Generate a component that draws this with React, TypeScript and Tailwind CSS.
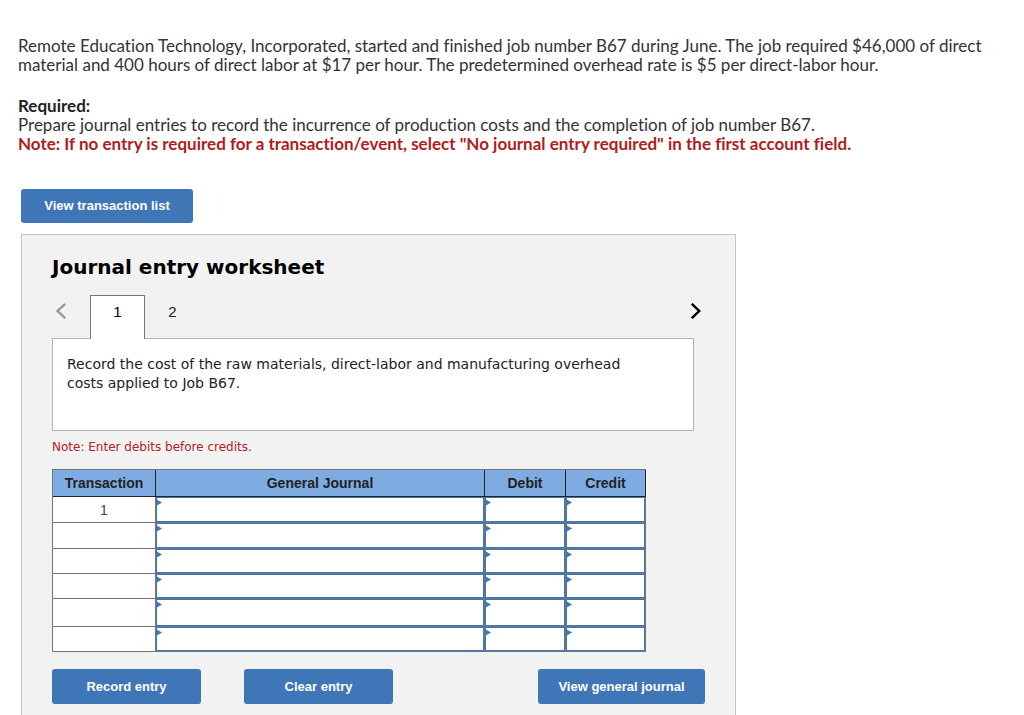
import { useState } from "react";
import clsx from "clsx";

const ENTRIES = [
  {
    id: 1,
    text: "Record the cost of the raw materials, direct-labor and manufacturing overhead costs applied to Job B67.",
  },
  { id: 2, text: "Record the completion of Job B67." },
];

const ROWS = [
  { label: "1", height: "h-[25px]" },
  { label: "", height: "h-[25px]" },
  { label: "", height: "h-[24px]" },
  { label: "", height: "h-[24px]" },
  { label: "", height: "h-[27px]" },
  { label: "", height: "h-[24px]" },
];

const FIELDS = ["General Journal", "Debit", "Credit"];

function Button({ className, children }: { className: string; children: React.ReactNode }) {
  return (
    <button
      type="button"
      className={clsx(
        "rounded-[3px] bg-[#3f76b7] text-[13px] leading-4 font-bold text-white hover:bg-[#35669f]",
        className,
      )}
    >
      {children}
    </button>
  );
}

function Chevron({ flip }: { flip?: boolean }) {
  return (
    <svg width="10" height="16" viewBox="0 0 10 16" fill="none" stroke="currentColor" strokeWidth="2.4">
      <path d={flip ? "M9.2 0.8 L1.6 8 L9.2 15.2" : "M0.8 0.8 L8.2 8 L0.8 15.2"} />
    </svg>
  );
}

function Field({ label, height }: { label: string; height: string }) {
  return (
    <td className="relative border-r border-b border-[#757575] p-0">
      <input
        type="text"
        aria-label={label}
        className={clsx("block w-full border border-[#3f76b7] bg-white px-2 text-sm outline-none", height)}
      />
      <svg className="absolute top-0.5 left-0" width="6" height="7" viewBox="0 0 6 7">
        <path d="M0 0 L6 3.5 L0 7 Z" fill="#3f76b7" />
      </svg>
    </td>
  );
}

function JournalTable() {
  return (
    <table className="mt-3.5 w-[594px] table-fixed border-separate border-spacing-0 border-t border-l border-[#757575] bg-white">
      <colgroup>
        <col className="w-[103px]" />
        <col />
        <col className="w-[81px]" />
        <col className="w-[80px]" />
      </colgroup>
      <thead>
        <tr className="h-[27px] bg-[#7eabe1] text-sm leading-4 text-[#222]">
          {["Transaction", ...FIELDS].map((h) => (
            <th key={h} className="border-r border-b border-[#222] p-0 font-bold">
              {h}
            </th>
          ))}
        </tr>
      </thead>
      <tbody>
        {ROWS.map((row, i) => (
          <tr key={i}>
            <td className="border-r border-b border-[#757575] p-0 text-center text-sm leading-4 text-[#444]">
              {row.label}
            </td>
            {FIELDS.map((f) => (
              <Field key={f} label={`${f}, line ${i + 1}`} height={row.height} />
            ))}
          </tr>
        ))}
      </tbody>
    </table>
  );
}

function Worksheet() {
  const [current, setCurrent] = useState(0);

  return (
    <section className="mt-[11px] w-full max-w-[715px] grow border border-b-0 border-[#c4c4c4] bg-[#f2f2f2] px-[30px] pt-5">
      <h2 className="font-['DejaVu_Sans',sans-serif] text-xl leading-6 font-bold text-black">
        Journal entry worksheet
      </h2>

      <div className="mt-4 flex h-11 w-full max-w-[651px] items-start">
        <button
          type="button"
          aria-label="Previous"
          disabled={current === 0}
          onClick={() => setCurrent(current - 1)}
          className="flex h-8 w-[38px] items-center pl-1 text-black disabled:text-[#999]"
        >
          <Chevron flip />
        </button>
        {ENTRIES.map((entry, i) => (
          <button
            key={entry.id}
            type="button"
            onClick={() => setCurrent(i)}
            className={clsx(
              "relative h-11 w-[55px] text-[15px] leading-5",
              i === current ? "border border-b-0 border-[#757575] bg-white pb-3" : "pb-2.5 text-[#222]",
            )}
          >
            {entry.id}
          </button>
        ))}
        <button
          type="button"
          aria-label="Next"
          disabled={current === ENTRIES.length - 1}
          onClick={() => setCurrent(current + 1)}
          className="ml-auto flex h-8 w-3 items-center text-black disabled:text-[#999]"
        >
          <Chevron />
        </button>
      </div>

      <div className="-mt-px h-[93px] w-full max-w-[642px] border border-[#b4b4b4] bg-white pt-4 pr-10 pl-3.5">
        <p className="font-['DejaVu_Sans',sans-serif] text-sm leading-[19px] text-[#222]">
          {ENTRIES[current].text}
        </p>
      </div>

      <p className="mt-2 font-['DejaVu_Sans',sans-serif] text-xs leading-4 text-[#b22222]">
        Note: Enter debits before credits.
      </p>

      <JournalTable />

      <div className="mt-[17px] flex w-full items-center">
        <Button className="h-[35px] w-[149px]">Record entry</Button>
        <Button className="ml-[43px] h-[35px] w-[149px]">Clear entry</Button>
        <Button className="ml-auto h-[35px] w-[167px]">View general journal</Button>
      </div>
    </section>
  );
}

export default function App() {
  return (
    <main className="flex min-h-screen flex-col bg-white px-[18px] pt-9 font-['Liberation_Sans',Arial,sans-serif]">
      <div className="font-['Lato',sans-serif] text-[17px] leading-[19px] text-[#333] [font-variant-ligatures:none]">
        <p>
          Remote Education Technology, Incorporated, started and finished job number B67 during June.
          The job required $46,000 of direct material and 400 hours of direct labor at $17 per hour.
          The predetermined overhead rate is $5 per direct-labor hour.
        </p>
        <p className="mt-[22px] font-bold text-[#222]">Required:</p>
        <p>
          Prepare journal entries to record the incurrence of production costs and the completion of
          job number B67.
        </p>
        <p className="font-bold text-[#b01c1c]">
          Note: If no entry is required for a transaction/event, select "No journal entry required"
          in the first account field.
        </p>
      </div>

      <div className="mt-9 flex grow flex-col items-start pl-[3px]">
        <Button className="h-[34px] w-[172px]">View transaction list</Button>
        <Worksheet />
      </div>
    </main>
  );
}
